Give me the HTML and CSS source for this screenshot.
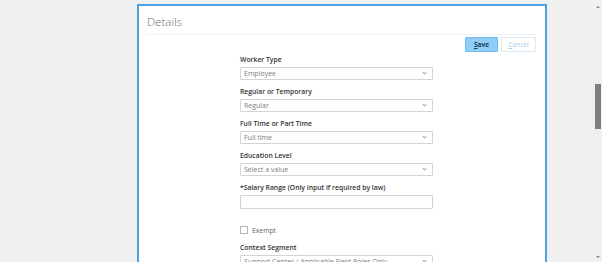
FILE: index.html
```html
<!DOCTYPE html>
<html>
<head>
<meta charset="utf-8">
<link rel="stylesheet" href="styles.css">
</head>
<body>
<div class="page">
  <div class="gutter"></div>
  <div class="panel">
    <div class="header">
      <h1 class="title">Details</h1>
    </div>
    <div class="actions">
      <button class="btn btn-save"><u>S</u>ave</button>
      <button class="btn btn-cancel"><u>C</u>ancel</button>
    </div>
    <div class="form">
      <div class="field">
        <div class="label">Worker Type</div>
        <div class="select"><span class="value">Employee</span><span class="chev"></span></div>
      </div>
      <div class="field">
        <div class="label">Regular or Temporary</div>
        <div class="select"><span class="value">Regular</span><span class="chev"></span></div>
      </div>
      <div class="field">
        <div class="label">Full Time or Part Time</div>
        <div class="select"><span class="value">Full time</span><span class="chev"></span></div>
      </div>
      <div class="field">
        <div class="label">Education Level</div>
        <div class="select"><span class="value">Select a value</span><span class="chev"></span></div>
      </div>
      <div class="field">
        <div class="label">*Salary Range (Only input if required by law)</div>
        <div class="input"></div>
      </div>
      <div class="check-row">
        <span class="checkbox"></span><span class="check-label">Exempt</span>
      </div>
      <div class="field">
        <div class="label">Context Segment</div>
        <div class="select"><span class="value">Support Center / Applicable Field Roles Only</span><span class="chev"></span></div>
      </div>
    </div>
  </div>
  <div class="scrollbar">
    <span class="arrow arrow-up"></span>
    <span class="thumb"></span>
    <span class="arrow arrow-down"></span>
  </div>
</div>
</body>
</html>
```
FILE: styles.css
```css
* { box-sizing: border-box; }
html, body { margin: 0; padding: 0; height: 100%; overflow: hidden; }
body {
  background: #f0f0f0;
  font-family: "Open Sans", "Liberation Sans", sans-serif;
}
.page {
  display: flex;
  height: 262px;
  padding-top: 4px;
}
.gutter { width: 137px; flex: none; }
.panel {
  width: 410px;
  flex: none;
  height: 300px;
  background: #fff;
  border: 2px solid #4aa3df;
  border-bottom: none;
  padding: 0 9px 0 8px;
}
.header {
  padding-top: 8px;
  height: 29px;
  border-bottom: 1px solid #f0f0f0;
}
.title {
  margin: 0;
  font-size: 11.5px;
  line-height: 15px;
  font-weight: 300;
  color: #6e6e6e;
}
.actions {
  display: flex;
  justify-content: flex-end;
  gap: 3px;
  margin-top: 2px;
}
.btn {
  height: 15px;
  padding: 0;
  font-family: inherit;
  font-size: 6.5px;
  line-height: 13px;
  border-radius: 1px;
}
.btn-save {
  width: 33px;
  background: #8ecdf6;
  border: 1px solid #6fbbeb;
  color: #1d3a52;
  font-weight: 700;
}
.btn-cancel {
  width: 35px;
  background: #fff;
  border: 1px solid #d7ebf8;
  color: #a9cbe3;
}
.form {
  margin-left: 93px;
  width: 193px;
  padding-top: 4px;
  display: flex;
  flex-direction: column;
}
.field { margin-bottom: 8px; }
.label {
  font-size: 6.8px;
  line-height: 8px;
  font-weight: 600;
  color: #333;
  margin-bottom: 3px;
  white-space: nowrap;
}
.select, .input {
  height: 13px;
  border: 1px solid #d4d4d4;
  border-radius: 1px;
  display: flex;
  align-items: center;
  padding: 0 6px 0 3px;
  background: #fff;
}
.input { height: 14px; }
.value {
  flex: 1;
  font-size: 7px;
  color: #7d7d7d;
  white-space: nowrap;
  overflow: hidden;
}
.chev {
  width: 3px;
  height: 3px;
  border-right: 1px solid #a8a8a8;
  border-bottom: 1px solid #a8a8a8;
  transform: rotate(45deg);
  margin-top: -2px;
}
.check-row {
  display: flex;
  align-items: center;
  gap: 4px;
  margin-top: 9px;
  margin-bottom: 10px;
  height: 8px;
}
.checkbox {
  width: 8px;
  height: 8px;
  border: 1px solid #b8b8b8;
  background: #fff;
}
.check-label {
  font-size: 6.8px;
  color: #666;
  line-height: 8px;
  padding-top: 2px;
}
.scrollbar {
  margin-left: auto;
  width: 8px;
  margin-top: -4px;
  height: 262px;
  display: flex;
  flex-direction: column;
  align-items: center;
  padding-top: 6px;
}
.arrow {
  width: 0;
  height: 0;
  border-left: 2px solid transparent;
  border-right: 2px solid transparent;
}
.arrow-up { border-bottom: 2px solid #8a8a8a; }
.arrow-down { border-top: 2px solid #8a8a8a; margin-top: auto; margin-bottom: 4px; }
.thumb {
  width: 6px;
  height: 45px;
  background: #7e7e7e;
  margin-top: 76px;
}
```
